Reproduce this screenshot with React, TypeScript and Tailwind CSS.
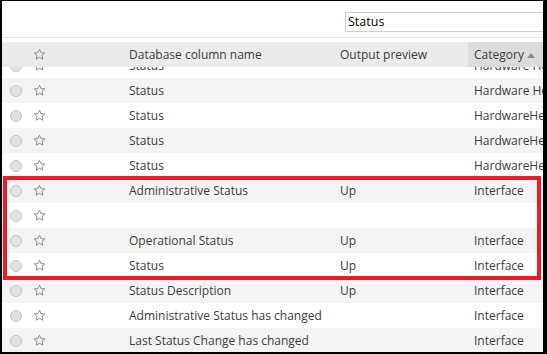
import React from "react";

interface Row {
  name: string;
  preview: string;
  category: string;
}

const rows: Row[] = [
  { name: "Status", preview: "", category: "Hardware Health" },
  { name: "Status", preview: "", category: "HardwareHealth" },
  { name: "Status", preview: "", category: "HardwareHealth" },
  { name: "Status", preview: "", category: "HardwareHealth" },
  { name: "Administrative Status", preview: "Up", category: "Interface" },
  { name: "", preview: "", category: "" },
  { name: "Operational Status", preview: "Up", category: "Interface" },
  { name: "Status", preview: "Up", category: "Interface" },
  { name: "Status Description", preview: "Up", category: "Interface" },
  { name: "Administrative Status has changed", preview: "", category: "Interface" },
  { name: "Last Status Change has changed", preview: "", category: "Interface" },
];

function Radio() {
  return (
    <span className="block w-[12px] h-[12px] rounded-full border border-[#c4c4c4] bg-[#e2e2e2] shrink-0" />
  );
}

function Star() {
  return (
    <svg width="13" height="13" viewBox="0 0 24 24" className="shrink-0">
      <path
        d="M12 2.2l2.9 6.3 6.9.7-5.2 4.6 1.5 6.8L12 17.1l-6.1 3.5 1.5-6.8-5.2-4.6 6.9-.7z"
        fill="none"
        stroke="#8a8a8a"
        strokeWidth="1.8"
        strokeLinejoin="round"
      />
    </svg>
  );
}

function TableRow({ row, shaded }: { row: Row; shaded: boolean }) {
  return (
    <div className={`flex items-center h-[25px] shrink-0 ${shaded ? "bg-[#f4f4f4]" : "bg-white"}`}>
      <div className="w-[127px] flex items-center">
        <div className="ml-[8px]">
          <Radio />
        </div>
        <div className="ml-[11px]">
          <Star />
        </div>
      </div>
      <div className="w-[211px] whitespace-nowrap">{row.name}</div>
      <div className="w-[134px] whitespace-nowrap">{row.preview}</div>
      <div className="flex-1 whitespace-nowrap overflow-hidden">{row.category}</div>
    </div>
  );
}

export default function App() {
  return (
    <div
      className="relative w-[547px] h-[354px] overflow-hidden bg-white border-black border-t border-l-2 border-r-4 border-b-2 text-[12px] text-[#3c3c3c] flex flex-col"
      style={{ fontFamily: '"Open Sans", "Liberation Sans", sans-serif' }}
    >
      {/* search bar */}
      <div className="h-[37px] shrink-0 border-b border-[#e6e6e6] pt-[11px] pl-[343px] overflow-hidden">
        <div className="w-[240px] h-[20px] border border-[#cfcfcf] flex items-center pl-[2px] text-black text-[12.5px]">
          Status
        </div>
      </div>

      {/* header */}
      <div className="mt-[4px] h-[25px] shrink-0 flex items-center bg-[#ebebeb] z-10">
        <div className="w-[127px] flex items-center">
          <div className="ml-[31px]">
            <Star />
          </div>
        </div>
        <div className="w-[211px] whitespace-nowrap">Database column name</div>
        <div className="w-[128px] whitespace-nowrap">Output preview</div>
        <div className="flex-1 h-full bg-[#dcdcdc] flex items-center pl-[6px] whitespace-nowrap">
          Category
          <svg width="8" height="5" viewBox="0 0 8 5" className="ml-[3px] mt-[1px]">
            <path d="M0 5L4 0L8 5z" fill="#8c8c8c" />
          </svg>
        </div>
      </div>

      {/* partially scrolled row */}
      <div className="h-[11px] shrink-0 overflow-hidden">
        <div className="-mt-[14px]">
          <TableRow row={{ name: "Status", preview: "", category: "Hardware Health" }} shaded={false} />
        </div>
      </div>

      {rows.map((row, i) => (
        <TableRow key={i} row={row} shaded={i % 2 === 0} />
      ))}

      {/* red highlight annotation */}
      <div className="absolute left-[1px] top-[175px] w-[538px] h-[104px] border-4 border-[#ed1c24] pointer-events-none" />
    </div>
  );
}
